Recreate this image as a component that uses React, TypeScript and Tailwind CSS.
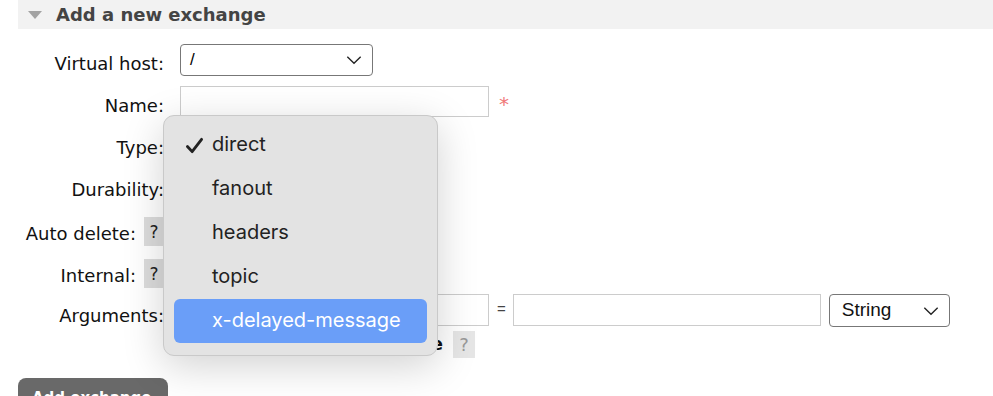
import React from "react";

const labelFont = { fontFamily: '"DejaVu Sans", Verdana, sans-serif' };
const arial = { fontFamily: '"Liberation Sans", Arial, sans-serif' };

const menuItems = ["direct", "fanout", "headers", "topic", "x-delayed-message"];

function Help() {
  return (
    <span className="ml-[8px] inline-flex h-[29px] w-[20px] items-center justify-center bg-[#dcdcdc] text-[17px] text-[#222]">
      ?
    </span>
  );
}

function Chevron({ className }: { className?: string }) {
  return (
    <svg viewBox="0 0 20 12" className={className} fill="none" stroke="#222" strokeWidth="1.6">
      <path d="M2 2 L10 10 L18 2" />
    </svg>
  );
}

function Row({ label, help, children }: { label: string; help?: boolean; children?: React.ReactNode }) {
  return (
    <div className="flex h-[42px] items-start">
      <div className="flex w-[164px] shrink-0 items-start justify-end pt-[11px] text-[18px] leading-[20px] text-[#111]">
        {help ? (
          <span className="flex items-center">
            <span>{label}</span>
            <span className="-mt-[5px]">
              <Help />
            </span>
          </span>
        ) : (
          <span>{label}</span>
        )}
      </div>
      <div className="ml-[16px] flex items-start">{children}</div>
    </div>
  );
}

export default function App() {
  return (
    <div className="relative h-[396px] w-[993px] overflow-hidden bg-white" style={labelFont}>
      <div className="ml-[18px] flex h-[29px] items-center bg-[#f2f2f2]">
        <svg viewBox="0 0 14 8" className="ml-[10px] h-[8px] w-[14px]">
          <polygon points="0,0 14,0 7,8" fill="#a3a3a3" />
        </svg>
        <span className="ml-[14px] text-[18px] font-bold text-[#444]">Add a new exchange</span>
      </div>

      <div className="mt-[14px]">
        <Row label="Virtual host:">
          <div className="mt-[1px] flex h-[32px] w-[193px] items-center justify-between rounded-[4px] border border-[#777] px-[9px]">
            <span className="text-[17px]" style={arial}>/</span>
            <Chevron className="h-[10px] w-[18px]" />
          </div>
        </Row>
        <Row label="Name:">
          <div className="mt-[1px] h-[31px] w-[309px] border border-[#ccc]" />
          <span className="ml-[10px] mt-[4px] text-[20px] text-[#f07878]">*</span>
        </Row>
        <Row label="Type:">
          <div className="mt-[1px] h-[32px] w-[160px] rounded-[4px] border border-[#777]" />
        </Row>
        <Row label="Durability:">
          <div className="mt-[1px] h-[32px] w-[160px] rounded-[4px] border border-[#777]" />
        </Row>
        <Row label="Auto delete:" help>
          <div className="mt-[1px] h-[32px] w-[100px] rounded-[4px] border border-[#777]" />
        </Row>
        <Row label="Internal:" help>
          <div className="mt-[1px] h-[32px] w-[100px] rounded-[4px] border border-[#777]" />
        </Row>
        <Row label="Arguments:">
          <div className="-mt-[1px] h-[32px] w-[309px] border border-[#ccc]" />
          <span className="ml-[8px] mt-[3px] text-[15px] text-[#444]" style={arial}>=</span>
          <div className="-mt-[1px] ml-[7px] h-[32px] w-[308px] border border-[#ccc]" />
          <div
            className="-mt-[1px] ml-[8px] flex h-[33px] w-[121px] items-center justify-between rounded-[4px] border border-[#777] pl-[12px] pr-[9px]"
            style={arial}
          >
            <span className="text-[19px] text-[#111]">String</span>
            <Chevron className="h-[10px] w-[18px]" />
          </div>
        </Row>
        <div className="-mt-[6px] flex h-[42px] items-start">
          <div className="ml-[180px] flex w-[263px] justify-end pt-[1px] text-[18px] font-bold leading-[24px] text-[#111]">
            <span>Add Alternate exchange</span>
          </div>
          <span className="ml-[10px] inline-flex h-[27px] w-[22px] items-center justify-center bg-[#e6e6e6] text-[18px] text-[#999]">?</span>
        </div>
        <div className="ml-[18px] mt-[5px] h-[40px] w-[150px] rounded-[8px] bg-[#696969] px-[14px] pt-[10px] text-[15px] font-bold leading-[20px] text-white">
          Add exchange
        </div>
      </div>

      <div
        className="absolute left-[163px] top-[115px] z-10 h-[241px] w-[275px] rounded-[11px] border border-[#c9c9c9] bg-[#e3e3e3] px-[10px] pt-[7px] shadow-[0_10px_40px_rgba(0,0,0,0.18)]"
        style={{ fontFamily: 'Inter, "Noto Sans", sans-serif' }}
      >
        {menuItems.map((item, i) => {
          const active = i === menuItems.length - 1;
          return (
            <div
              key={item}
              className={`flex h-[44px] items-center rounded-[6px] ${active ? "bg-[#6a9ef8] text-white" : "text-[#222]"}`}
            >
              <span className="flex w-[38px] justify-end pr-[8px]">
                {i === 0 && (
                  <svg viewBox="0 0 20 18" className="h-[17px] w-[19px]" fill="none" stroke="#222" strokeWidth="3" strokeLinecap="round" strokeLinejoin="round">
                    <path d="M2.5 10 L7.5 15.5 L17.5 2.5" />
                  </svg>
                )}
              </span>
              <span className="-mt-[2px] text-[20px] leading-none">{item}</span>
            </div>
          );
        })}
      </div>
    </div>
  );
}
